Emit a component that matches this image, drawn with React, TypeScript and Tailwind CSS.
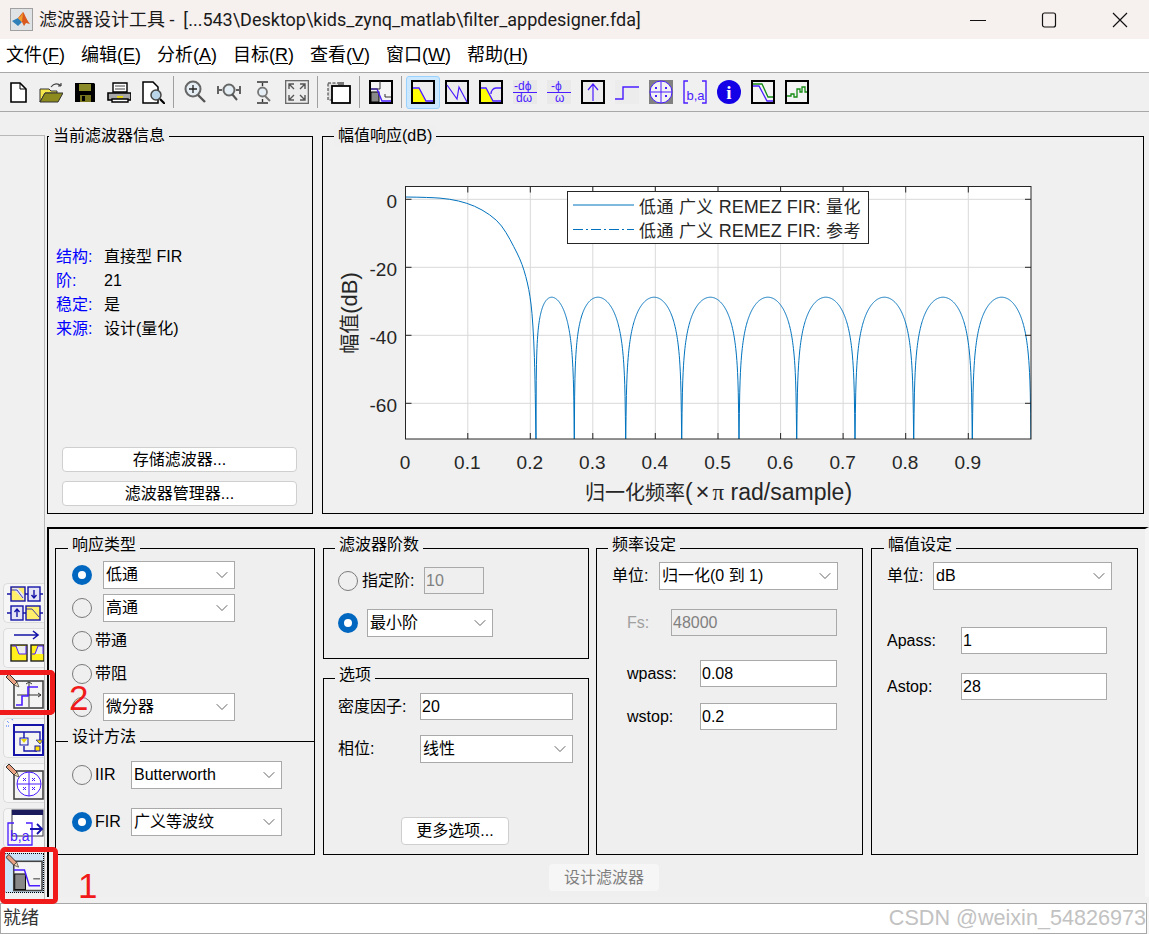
import type { ReactNode } from 'react';
import { ChevronDown } from 'lucide-react';

const PURPLE = '#4a1cff';
const BLUE = '#1414a8';

// ---- plot data, in page pixels ----
const yOf = (db: number) => 199.3 - db * 3.4;
const xTicks = [405.5, 467.8, 530.3, 592.8, 655.3, 718, 780.6, 843.1, 905.7, 968.3];
const xLabels = ['0', '0.1', '0.2', '0.3', '0.4', '0.5', '0.6', '0.7', '0.8', '0.9'];
const yTicks = [0, -20, -40, -60];
const nulls = [536, 574.3, 625.7, 681.7, 739, 796.7, 855, 913.7, 972.3, 1031];
const skews = [0.78, 0.89, 1.02, 1, 1, 1, 1, 1, 1];
const passband = [
  [405.5, 197],
  [430, 197.3],
  [450, 199],
  [467, 203],
  [482, 209.5],
  [497, 220],
  [506, 232],
  [514, 247],
  [520, 259],
  [524, 270],
  [527.5, 283],
  [530, 296],
  [532, 312],
  [533.8, 340],
  [535, 375],
  [536, 445],
];

function lobes() {
  // passband is smoothed through the midpoints so it has no kinks
  let d = `M${passband[0][0]} ${passband[0][1]}`;
  passband.slice(1, -1).forEach(([x, y], i) => {
    const [nx, ny] = passband[i + 2];
    d += ` Q${x} ${y} ${(x + nx) / 2} ${(y + ny) / 2}`;
  });
  d += ` L536 445`;
  nulls.slice(0, -1).forEach((a, i) => {
    const b = nulls[i + 1];
    for (let n = 1; n <= 160; n++) {
      const t = n / 160;
      const s = Math.sin(Math.PI * Math.pow(t, skews[i]));
      const db = -28.8 + 20 * Math.log10(Math.max(s, 0.0005));
      d += ` L${(a + (b - a) * t).toFixed(2)} ${Math.min(yOf(db), 445).toFixed(2)}`;
    }
  });
  return d;
}

function Plot() {
  return (
    <svg width={820} height={376} viewBox="323 137 820 376" className="block">
      <defs>
        <clipPath id="axes">
          <rect x={405.5} y={186.5} width={625.5} height={252.5} />
        </clipPath>
      </defs>
      <rect x={405.5} y={186.5} width={625.5} height={252.5} fill="#fff" />
      {xTicks.slice(1).map((x) => (
        <line key={x} x1={x} x2={x} y1={186.5} y2={439} stroke="#d9d9d9" />
      ))}
      {yTicks.map((v) => (
        <line key={v} x1={405.5} x2={1031} y1={yOf(v)} y2={yOf(v)} stroke="#d9d9d9" />
      ))}
      <path d={lobes()} fill="none" stroke="#0072bd" strokeWidth={1} clipPath="url(#axes)" />
      <rect x={405.5} y={186.5} width={625.5} height={252.5} fill="none" stroke="#262626" />
      {xTicks.slice(1).map((x) => (
        <g key={x} stroke="#262626">
          <line x1={x} x2={x} y1={186.5} y2={192.5} />
          <line x1={x} x2={x} y1={439} y2={433} />
        </g>
      ))}
      {yTicks.map((v) => (
        <g key={v} stroke="#262626">
          <line x1={405.5} x2={411.5} y1={yOf(v)} y2={yOf(v)} />
          <line x1={1031} x2={1025} y1={yOf(v)} y2={yOf(v)} />
        </g>
      ))}
      <g fill="#262626" fontSize={19}>
        {xTicks.map((x, i) => (
          <text key={x} x={x - 0.5} y={468.5} textAnchor="middle">
            {xLabels[i]}
          </text>
        ))}
        {yTicks.map((v) => (
          <text key={v} x={397} y={yOf(v) + 8.5} textAnchor="end">
            {v}
          </text>
        ))}
        <text x={718.5} y={499.5} textAnchor="middle" fontSize={20}>
          归一化频率
          <tspan fontSize={23}>(</tspan>
          <tspan fontSize={24} dx={3}>×</tspan>
          <tspan fontSize={23} dx={3} fontFamily="'Liberation Serif', serif">π</tspan>
          <tspan fontSize={23}> rad/sample)</tspan>
        </text>
        <text transform="translate(357 313) rotate(-90)" textAnchor="middle" fontSize={20}>
          幅值<tspan fontSize={22}>(dB)</tspan>
        </text>
      </g>
      <rect x={567.5} y={191.5} width={301} height={52} fill="#fff" stroke="#262626" />
      <line x1={573} x2={634} y1={205} y2={205} stroke="#0072bd" />
      <line x1={573} x2={634} y1={229.5} y2={229.5} stroke="#0072bd" strokeDasharray="10 3 2 3" />
      <g fill="#262626" fontSize={17}>
        <text x={639} y={213} letterSpacing={0.4}>
          低通 广义 <tspan fontSize={18} letterSpacing={0}>REMEZ FIR:</tspan> 量化
        </text>
        <text x={639} y={237} letterSpacing={0.4}>
          低通 广义 <tspan fontSize={18} letterSpacing={0}>REMEZ FIR:</tspan> 参考
        </text>
      </g>
    </svg>
  );
}

// ---- toolbar icons, 24 box ----
function Box({ children, fill = '#ececec' }: { children?: ReactNode; fill?: string }) {
  return (
    <svg width={24} height={24} viewBox="0 0 24 24" fill="none">
      <rect x={1} y={1} width={22} height={22} fill={fill} stroke="#000" strokeWidth={2} />
      {children}
    </svg>
  );
}

function Bare({ children }: { children?: ReactNode }) {
  return (
    <svg width={24} height={24} viewBox="0 0 24 24" fill="none">
      {children}
    </svg>
  );
}

const toolsA = [
  <Bare key="new">
    <path d="M6 3h9l6 6v13H6z" fill="#fff" stroke="#000" strokeWidth={1.6} />
    <path d="M15 3v6h6" stroke="#000" />
  </Bare>,
  <Bare key="open">
    <path d="M1 9h9l2 2h6v2H6L1 22z" fill="#f5e64a" stroke="#333" />
    <path d="M1 22l5-9h18l-5 9z" fill="#8d8a1e" stroke="#333" />
    <path d="M12 7c3-4 7-4 10-1M22 6V3M22 6h-3" stroke="#444" strokeWidth={1.2} />
  </Bare>,
  <Bare key="save">
    <path d="M3 3h18l1 1v18H2V3z" fill="#000" />
    <rect x={6} y={4} width={12} height={7} fill="#8b8b2a" />
    <rect x={7} y={15} width={11} height={7} fill="#77761f" />
    <rect x={9} y={16} width={3} height={5} fill="#000" />
  </Bare>,
  <Bare key="print">
    <path d="M6 3h14v9H6z" fill="#fff" stroke="#000" strokeWidth={1.4} />
    <path d="M8 6h10M8 9h10" stroke="#444" />
    <path d="M1 13h23v7H1z" fill="#a8a8a8" stroke="#000" strokeWidth={1.6} />
    <path d="M5 19h16v3H5z" fill="#fff" stroke="#000" strokeWidth={1.4} />
    <rect x={10} y={16} width={6} height={1.8} fill="#e8d800" />
  </Bare>,
  <Bare key="preview">
    <path d="M2 2h10l5 5v16H2z" fill="#fff" stroke="#000" strokeWidth={1.5} />
    <circle cx={15} cy={15} r={5} fill="#b8d4e6" stroke="#444" strokeWidth={1.5} />
    <path d="M19 19l5 5" stroke="#000" strokeWidth={2.2} />
  </Bare>,
];

const toolsB = [
  <Bare key="zoom">
    <circle cx={10} cy={9} r={7.5} fill="#e4eef4" stroke="#666" strokeWidth={2} />
    <path d="M6 9h8M10 5v8" stroke="#222" strokeWidth={1.3} />
    <path d="M15 15l7 7" stroke="#555" strokeWidth={2.4} />
  </Bare>,
  <Bare key="zoomx">
    <circle cx={12} cy={10} r={5.5} fill="#e4eef4" stroke="#666" strokeWidth={2} />
    <path d="M1 6v8M23 6v8M2 10h3M19 10h3" stroke="#333" strokeWidth={1.5} />
    <path d="M15 14l5 6" stroke="#555" strokeWidth={2} />
  </Bare>,
  <Bare key="zoomy">
    <path d="M6 2h11M6 23h11M11.5 3v3M11.5 19v3" stroke="#333" strokeWidth={1.4} />
    <circle cx={11.5} cy={12} r={4.5} fill="#e4eef4" stroke="#777" strokeWidth={1.8} />
    <path d="M14 16l5 5" stroke="#777" strokeWidth={2} />
  </Bare>,
  <Bare key="full">
    <rect x={0.5} y={0.5} width={23} height={23} fill="#ececec" stroke="#6a6a6a" strokeWidth={1.6} />
    <path d="M4 9V4h5M20 9V4h-5M4 15v5h5M20 15v5h-5M4 4l5 5M20 4l-5 5M4 20l5-5M20 20l-5-5" stroke="#555" strokeWidth={1.4} />
  </Bare>,
];

const copyIcon = (
  <Bare key="copy">
    <path d="M1 3h14v17H1z" fill="#ddd" stroke="#333" strokeDasharray="3 1.5" />
    <rect x={5} y={6} width={18} height={17} fill="#fff" stroke="#000" strokeWidth={1.8} />
    <path d="M11 2h6v3h-6z" fill="#777" />
  </Bare>
);

const overlayIcon = (
  <Box key="overlay" fill="#f4f4f4">
    <rect x={2} y={12} width={8} height={10} fill="#888" stroke="#000" />
    <path d="M2 9h6l5 12h9" stroke={PURPLE} strokeWidth={1.4} />
    <path d="M11 1v8H2M16 14v3h6" stroke="#333" />
  </Box>
);

const filterTools = [
  <Box key="mag">
    <path d="M2 9h6l7 13H2z" fill="#ff0" />
    <path d="M2 8h6l7 13h7" stroke={PURPLE} strokeWidth={1.3} />
  </Box>,
  <Box key="phase">
    <path d="M2 5l10 14 2-12 8 15" stroke={PURPLE} strokeWidth={1.2} />
  </Box>,
  <Box key="magphase">
    <path d="M2 9h5l7 13H2z" fill="#ff0" />
    <path d="M2 8h5l7 13h8M22 8h-5c-3 0-5 3-5 6" stroke={PURPLE} strokeWidth={1.3} />
  </Box>,
  <Bare key="group">
    <rect width={24} height={24} fill="#e9e9e9" />
    <g fill={PURPLE} fontSize={12} fontFamily="'Liberation Sans', sans-serif">
      <text x={1} y={10}>-dϕ</text>
      <text x={3} y={22}>dω</text>
    </g>
    <path d="M0 12.5h24" stroke={PURPLE} />
  </Bare>,
  <Bare key="phasedelay">
    <rect width={24} height={24} fill="#e9e9e9" />
    <g fill={PURPLE} fontSize={12} fontFamily="'Liberation Sans', sans-serif">
      <text x={4} y={10}>-ϕ</text>
      <text x={8} y={22}>ω</text>
    </g>
    <path d="M0 12.5h24" stroke={PURPLE} />
  </Bare>,
  <Box key="impulse">
    <path d="M12 21V4M7 10l5-6 5 6" stroke={PURPLE} strokeWidth={1.2} />
  </Box>,
  <Bare key="step">
    <rect width={24} height={24} fill="#ececec" />
    <path d="M0 19h8V7h16" stroke={PURPLE} strokeWidth={1.4} />
  </Bare>,
  <Bare key="pz">
    <rect width={24} height={24} fill="#808080" />
    <circle cx={12} cy={12} r={11} fill="#f2f2f2" stroke={PURPLE} />
    <path d="M1 12h22M12 1v22" stroke={PURPLE} />
    <path d="M6 7l2 2M8 7l-2 2M16 7l2 2M18 7l-2 2M6 15l2 2M8 15l-2 2M16 15l2 2M18 15l-2 2" stroke={PURPLE} />
  </Bare>,
  <Bare key="ba">
    <path d="M5 1H1v22h4M19 1h4v22h-4" stroke={PURPLE} strokeWidth={1.4} />
    <text x={3.5} y={20} fill={PURPLE} fontSize={13} fontFamily="'Liberation Sans', sans-serif">b,a</text>
  </Bare>,
  <Bare key="info">
    <circle cx={12} cy={12} r={12} fill="#1400e6" />
    <text x={12} y={19} textAnchor="middle" fill="#fff" fontSize={19} fontWeight={700} fontFamily="'Liberation Serif', serif">i</text>
  </Bare>,
  <Box key="roundoff" fill="#f4f4f4">
    <path d="M2 6h6l8 15h6" stroke={PURPLE} strokeWidth={1.3} />
    <path d="M2 4h9l6 13h5" stroke="#138a13" strokeWidth={1.3} />
  </Box>,
  <Box key="noise" fill="#f4f4f4">
    <path d="M2 16h4v-2h3v3h3v-8h3v3h2V7h3v5h2" stroke="#138a13" strokeWidth={1.3} />
  </Box>,
];

function Cell({ children, active }: { children: ReactNode; active?: boolean }) {
  return (
    <div
      className={
        active
          ? 'w-[34px] h-[33px] shrink-0 flex items-center justify-center rounded-[3px] bg-[#cce8ff] border border-[#99d1ff]'
          : 'w-[34px] h-[33px] shrink-0 flex items-center justify-center'
      }>
      {children}
    </div>
  );
}

function Sep() {
  return <div className="w-px h-[32px] ml-[3px] mr-[4px] bg-[#a0a0a0] shrink-0" />;
}

function Toolbar() {
  return (
    <div className="h-[40px] flex items-center -ml-px border-y border-[#a8a8a8] pl-px bg-[#f0f0f0]">
      {toolsA.map((t) => <Cell key={t.key}>{t}</Cell>)}
      <Sep />
      {toolsB.map((t) => <Cell key={t.key}>{t}</Cell>)}
      <Sep />
      <Cell>{copyIcon}</Cell>
      <Sep />
      <Cell>{overlayIcon}</Cell>
      <Sep />
      {filterTools.map((t, i) => <Cell key={t.key} active={i === 0}>{t}</Cell>)}
    </div>
  );
}

// ---- sidebar icons, 40 box ----
function Pencil() {
  return (
    <g>
      <path d="M2 4l3-3 8 8-3 3z" fill="#e8a080" stroke="#333" />
      <path d="M10 12l3-3 2 5z" fill="#f4d8b0" stroke="#333" strokeWidth={0.7} />
    </g>
  );
}

function Tile({ children, active }: { children: ReactNode; active?: boolean }) {
  return (
    <div
      className={
        active
          ? 'w-[41px] h-[40px] flex items-center justify-center bg-[#cce4f7] border border-dotted border-black rounded-l-[4px]'
          : 'w-[41px] h-[40px] flex items-center justify-center bg-[#f6f6f6] border-y border-l border-[#dcdcdc] rounded-l-[5px]'
      }>
      <svg width={40} height={40} viewBox="0 0 40 40" fill="none">
        {children}
      </svg>
    </div>
  );
}

const sideIcons = [
  <g key="a" stroke={BLUE} strokeWidth={1.4}>
    <rect x={7} y={4} width={14} height={14} fill="#ffef6a" />
    <path d="M8 5h6l6 7v5" fill="#e4e4f4" strokeWidth={0} />
    <path d="M7 7h6l6 8" strokeWidth={0.8} />
    <rect x={24} y={4} width={12} height={14} fill="#e4e4f4" />
    <rect x={7} y={23} width={12} height={14} fill="#e4e4f4" />
    <rect x={22} y={23} width={14} height={14} fill="#ffef6a" />
    <path d="M22 26h6l7 8" strokeWidth={0.8} />
    <path d="M3 11h4M21 11h3M36 11h3M3 30h4M19 30h3M36 30h3M30 7v8M27.5 12l2.5 3 2.5-3M13 34v-8M10.5 29l2.5-3 2.5 3" />
  </g>,
  <g key="b">
    <path d="M10 7h24M29 3l5 4-5 4" stroke={BLUE} strokeWidth={1.6} />
    <rect x={7} y={17} width={16} height={16} fill="#ffef1a" stroke="#222" strokeWidth={1.4} />
    <rect x={27} y={17} width={13} height={16} fill="#ffef1a" stroke="#222" strokeWidth={1.4} />
    <path d="M8 18h4l3 8h7V18M28 26h3l3-8h5v8" fill="#ececec" stroke={PURPLE} />
  </g>,
  <g key="c">
    <rect x={10} y={8} width={29} height={27} fill="#f4f4f4" stroke="#444" strokeWidth={1.6} />
    <path d="M25 9v25M13 22h24M34 20l3 2-3 2M22 11l3-2 3 2" stroke="#333" />
    <path d="M12 32h6v-9h6v-9h10" stroke={PURPLE} strokeWidth={1.6} />
    <Pencil />
  </g>,
  <g key="d">
    <path d="M3 3l2 2M8 1l1 2M2 8h3" stroke="#3a6cff" strokeDasharray="1 1" />
    <rect x={10} y={7} width={29} height={30} fill="#f4f4f4" stroke={BLUE} strokeWidth={2} />
    <path d="M9 14h27v8M20 14v6M20 28v5h13" stroke={BLUE} strokeWidth={1.4} />
    <rect x={16} y={20} width={8} height={7} fill="#f4f4f4" stroke={BLUE} />
    <path d="M17 21h6l-3 4z" fill="#e8d800" />
    <path d="M32 22h7l-3 4z" fill="#e8d800" stroke={BLUE} strokeWidth={0.7} />
    <rect x={31} y={28} width={5} height={5} fill="#ffe000" stroke={BLUE} />
  </g>,
  <g key="e">
    <rect x={10} y={8} width={29} height={28} fill="#f4f4f4" stroke="#444" strokeWidth={1.6} />
    <circle cx={25} cy={21} r={12} fill="#fff" stroke={PURPLE} />
    <path d="M13 21h24M25 9v24" stroke={PURPLE} />
    <path d="M19 15l3 3M22 15l-3 3M28 15l3 3M31 15l-3 3M19 24l3 3M22 24l-3 3M28 24l3 3M31 24l-3 3" stroke={PURPLE} />
    <Pencil />
  </g>,
  <g key="f">
    <rect x={8} y={2} width={31} height={26} fill="#fff" stroke="#334" />
    <rect x={8} y={2} width={31} height={5} fill="#1c1c5c" />
    <path d="M10 15H4v22h24V15h-6" stroke={PURPLE} strokeWidth={1.3} />
    <text x={6} y={33} fill={PURPLE} fontSize={14} fontFamily="'Liberation Sans', sans-serif">b,a</text>
    <path d="M26 21h12M33 16l5 5-5 5" stroke={BLUE} strokeWidth={1.8} />
  </g>,
  <g key="g">
    <rect x={10} y={8} width={29} height={30} fill="#f4f4f4" stroke="#444" strokeWidth={1.6} />
    <rect x={11} y={21} width={11} height={16} fill="#888" stroke="#000" />
    <path d="M10 17h11l5 16h11" stroke={PURPLE} strokeWidth={1.5} />
    <path d="M30 26h7" stroke="#333" />
    <Pencil />
  </g>,
];

// ---- form controls ----
function Radio({ checked }: { checked?: boolean }) {
  return (
    <span
      className={
        checked
          ? 'block w-[20px] h-[20px] shrink-0 rounded-full border-[6px] border-[#0067c0] bg-white'
          : 'block w-[20px] h-[20px] shrink-0 rounded-full border-[1.5px] border-[#7a7a7a]'
      }
    />
  );
}

function Select({ label, className }: { label: string; className: string }) {
  return (
    <div className={`h-[28px] flex items-center justify-between bg-white border border-[#a9a9a9] pl-[2px] shrink-0 ${className}`}>
      <span>{label}</span>
      <ChevronDown size={20} strokeWidth={1} color="#444" className="mr-[2px]" />
    </div>
  );
}

function Field({ value, className, disabled }: { value: string; className: string; disabled?: boolean }) {
  return (
    <input
      readOnly
      value={value}
      className={`h-[27px] border border-[#a9a9a9] pl-[1px] outline-none shrink-0 ${
        disabled ? 'bg-transparent text-[#808080]' : 'bg-white text-black'
      } ${className}`}
    />
  );
}

function Button({ children, className }: { children: ReactNode; className: string }) {
  return (
    <button type="button" className={`bg-white border border-[#cfcfcf] rounded-[4px] text-center leading-none ${className}`}>
      {children}
    </button>
  );
}

function Legend({ children, className }: { children: ReactNode; className: string }) {
  return (
    <span className={`absolute px-[4px] h-[22px] leading-[22px] bg-[#efefef] whitespace-nowrap ${className}`}>
      {children}
    </span>
  );
}

function Group({ title, left, className, children }: { title: string; left: string; className: string; children?: ReactNode }) {
  return (
    <section className={`relative border border-black shrink-0 ${className}`}>
      <Legend className={left}>{title}</Legend>
      {children}
    </section>
  );
}

const RowRadio = 'h-[28px] flex items-center';

function ResponseGroup() {
  return (
    <Group title="响应类型" left="left-[12px] -top-[15px]" className="w-[260px] h-[307px]">
      <div className="pt-[12px] pl-[16px] flex flex-col gap-[5px]">
        <div className={`${RowRadio} gap-[11px]`}>
          <Radio checked />
          <Select label="低通" className="w-[132px]" />
        </div>
        <div className={`${RowRadio} gap-[11px]`}>
          <Radio />
          <Select label="高通" className="w-[132px]" />
        </div>
        <div className={`${RowRadio} gap-[3px]`}>
          <Radio />
          <span>带通</span>
        </div>
        <div className={`${RowRadio} gap-[3px]`}>
          <Radio />
          <span>带阻</span>
        </div>
        <div className={`${RowRadio} gap-[11px]`}>
          <Radio />
          <Select label="微分器" className="w-[132px]" />
        </div>
      </div>
      <div className="relative mt-[20px] border-t border-black pt-[19px] pl-[16px] flex flex-col gap-[19px]">
        <Legend className="left-[12px] -top-[16px]">设计方法</Legend>
        <div className={RowRadio}>
          <Radio />
          <span className="ml-[3px] w-[36px]">IIR</span>
          <Select label="Butterworth" className="w-[151px]" />
        </div>
        <div className={RowRadio}>
          <Radio checked />
          <span className="ml-[3px] w-[36px]">FIR</span>
          <Select label="广义等波纹" className="w-[151px]" />
        </div>
      </div>
    </Group>
  );
}

function OrderGroup() {
  return (
    <Group title="滤波器阶数" left="left-[11px] -top-[15px]" className="w-[266px] h-[111px]">
      <div className="pt-[18px] pl-[14px] flex items-center">
        <Radio />
        <span className="ml-[4px] w-[62px]">指定阶:</span>
        <Field value="10" disabled className="w-[60px]" />
      </div>
      <div className="mt-[15px] pl-[14px] flex items-center gap-[9px]">
        <Radio checked />
        <Select label="最小阶" className="w-[126px]" />
      </div>
    </Group>
  );
}

function OptionsGroup() {
  return (
    <Group title="选项" left="left-[11px] -top-[15px]" className="w-[266px] h-[177px]">
      <div className="pt-[14px] pl-[14px] flex items-center">
        <span className="w-[82px]">密度因子:</span>
        <Field value="20" className="w-[153px]" />
      </div>
      <div className="mt-[15px] pl-[14px] flex items-center">
        <span className="w-[82px]">相位:</span>
        <Select label="线性" className="w-[153px]" />
      </div>
      <Button className="block ml-[77px] mt-[54px] w-[108px] h-[28px]">更多选项...</Button>
    </Group>
  );
}

function FreqGroup() {
  return (
    <Group title="频率设定" left="left-[11px] -top-[15px]" className="w-[267px] h-[307px]">
      <div className="pt-[13px] pl-[15px] flex items-center">
        <span className="w-[47px]">单位:</span>
        <Select label="归一化(0 到 1)" className="w-[179px]" />
      </div>
      <div className="mt-[19px] pl-[30px] flex items-center text-[#a0a0a0]">
        <span className="w-[44px]">Fs:</span>
        <Field value="48000" disabled className="w-[166px]" />
      </div>
      <div className="mt-[24px] pl-[30px] flex items-center">
        <span className="w-[73px]">wpass:</span>
        <Field value="0.08" className="w-[137px]" />
      </div>
      <div className="mt-[16px] pl-[30px] flex items-center">
        <span className="w-[73px]">wstop:</span>
        <Field value="0.2" className="w-[137px]" />
      </div>
    </Group>
  );
}

function MagGroup() {
  return (
    <Group title="幅值设定" left="left-[12px] -top-[15px]" className="w-[267px] h-[307px]">
      <div className="pt-[13px] pl-[15px] flex items-center">
        <span className="w-[46px]">单位:</span>
        <Select label="dB" className="w-[179px]" />
      </div>
      <div className="mt-[37px] pl-[15px] flex items-center">
        <span className="w-[74px]">Apass:</span>
        <Field value="1" className="w-[146px]" />
      </div>
      <div className="mt-[19px] pl-[15px] flex items-center">
        <span className="w-[74px]">Astop:</span>
        <Field value="28" className="w-[146px]" />
      </div>
    </Group>
  );
}

function MenuItem({ name, hot }: { name: string; hot: string }) {
  return (
    <span>
      {name}(<span className="underline underline-offset-2">{hot}</span>)
    </span>
  );
}

const menus = [
  ['文件', 'F'],
  ['编辑', 'E'],
  ['分析', 'A'],
  ['目标', 'R'],
  ['查看', 'V'],
  ['窗口', 'W'],
  ['帮助', 'H'],
];

export default function App() {
  return (
    <div className="relative w-[1149px] h-[934px] overflow-hidden flex flex-col bg-[#f5f5f5] text-[16px] text-black font-['Liberation_Sans','Noto_Sans_CJK_SC',sans-serif]">
      <header className="h-[39px] shrink-0 flex items-center bg-[#f6f0ee] pl-[10px] text-[18px] text-[#1a1a1a] font-['Roboto','Noto_Sans_CJK_SC',sans-serif]">
        <svg width={23} height={23} viewBox="0 0 23 23" className="shrink-0">
          <rect x={0.5} y={0.5} width={22} height={22} fill="#dfe3e6" stroke="#a0a0a0" />
          <path d="M2 13l6-3 4 4-4 4z" fill="#2f7fb8" />
          <path d="M8 10l5-6c1 0 3 7 7 12l-4-1-2 3-2-4z" fill="#d9591e" />
          <path d="M13 4c-1 2-2 5-5 6l4 4z" fill="#f0a030" />
        </svg>
        <span className="ml-[6px] whitespace-pre">滤波器设计工具 -  [...543\Desktop\kids_zynq_matlab\filter_appdesigner.fda]</span>
        <div className="ml-auto mr-[21px] flex items-center gap-[55px]">
          <svg width={16} height={16} viewBox="0 0 16 16" fill="none" stroke="#111">
            <path d="M0 8.5h16" />
          </svg>
          <svg width={16} height={16} viewBox="0 0 16 16" fill="none" stroke="#111" strokeWidth={1.2}>
            <rect x={1.5} y={1} width={13} height={14} rx={2} />
          </svg>
          <svg width={16} height={16} viewBox="0 0 16 16" fill="none" stroke="#111" strokeWidth={1.2}>
            <path d="M1 1l14 14M15 1L1 15" />
          </svg>
        </div>
      </header>

      <nav className="h-[33px] shrink-0 bg-white flex items-center gap-[16px] pl-[6px] text-[18px]">
        {menus.map(([n, h]) => (
          <MenuItem key={n} name={n} hot={h} />
        ))}
      </nav>

      <Toolbar />

      <main className="h-[791px] shrink-0 flex bg-[#f0f0f0]">
        <aside className="w-[45px] shrink-0 mt-[23px] border-t border-r border-[#b8b8b8] flex flex-col justify-end gap-[5px] pl-[3px] pb-[10px]">
          {sideIcons.map((icon, i) => (
            <Tile key={icon.key} active={i === 6}>
              {icon}
            </Tile>
          ))}
        </aside>

        <div className="flex-1 min-w-0 pl-[2px] pt-[24px] flex flex-col">
          <div className="flex gap-[9px] h-[378px] shrink-0">
            <Group title="当前滤波器信息" left="left-[1px] -top-[12px]" className="w-[266px] h-[378px] flex flex-col">
              <dl className="mt-[108px] ml-[8px] grid grid-cols-[48px_auto] auto-rows-[24px] items-center justify-start">
                <dt className="text-[#0000ff]">结构:</dt>
                <dd>直接型 FIR</dd>
                <dt className="text-[#0000ff]">阶:</dt>
                <dd>21</dd>
                <dt className="text-[#0000ff]">稳定:</dt>
                <dd>是</dd>
                <dt className="text-[#0000ff]">来源:</dt>
                <dd>设计(量化)</dd>
              </dl>
              <div className="mt-auto mb-[7px] ml-[14px] mr-[15px] flex flex-col gap-[9px]">
                <Button className="h-[25px] w-full">存储滤波器...</Button>
                <Button className="h-[25px] w-full">滤波器管理器...</Button>
              </div>
            </Group>
            <Group title="幅值响应(dB)" left="left-[11px] -top-[12px]" className="w-[822px] h-[378px]">
              <Plot />
            </Group>
          </div>

          <div className="mt-[13px] h-[370px] w-[1102px] shrink-0 bg-[#efefef] border-t-2 border-l-2 border-black border-r-4 border-r-[#f5f5f5] pt-[19px] pl-[6px]">
            <div className="flex items-start">
              <ResponseGroup />
              <div className="ml-[8px] flex flex-col gap-[19px]">
                <OrderGroup />
                <OptionsGroup />
              </div>
              <div className="ml-[7px]">
                <FreqGroup />
              </div>
              <div className="ml-[8px]">
                <MagGroup />
              </div>
            </div>
            <button type="button" className="block mt-[9px] ml-[494px] w-[110px] h-[27px] bg-[#f6f6f6] rounded-[4px] text-[#808080] leading-none">
              设计滤波器
            </button>
          </div>
        </div>
      </main>

      <footer className="h-[31px] w-[1147px] shrink-0 bg-white border border-[#a8a8a8] flex items-center justify-between pl-[2px] text-[18px] text-[#333]">
        <span>就绪</span>
        <span className="text-[21.6px] text-[#c2c2c2] whitespace-nowrap">CSDN @weixin_54826973</span>
      </footer>

      {/* 截图上的红色标注 */}
      <div className="absolute left-0 top-[670px] w-[55px] h-[45px] border-[5px] border-[#f01a1a] border-l-0 rounded-r-[5px]" />
      <div className="absolute left-0 top-[847px] w-[58px] h-[57px] border-[5px] border-[#f01a1a] rounded-[5px]" />
      <span className="absolute left-[69px] top-[680px] text-[35px] leading-none text-[#f01a1a]">2</span>
      <span className="absolute left-[78px] top-[868px] text-[35px] leading-none text-[#f01a1a]">1</span>
    </div>
  );
}
